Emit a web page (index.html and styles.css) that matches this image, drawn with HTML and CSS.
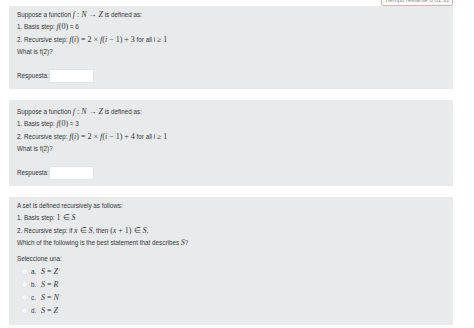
FILE: index.html
```html
<!DOCTYPE html>
<html lang="es">
<head>
<meta charset="utf-8">
<title>Quiz</title>
<link rel="stylesheet" href="styles.css">
</head>
<body>
<div class="timer">Tiempo restante 0:01:31</div>
<main class="page">
  <section class="que que-1">
    <div class="line">Suppose a function <span class="m"><i>f</i> : <i>N</i> → <i>Z</i></span> is defined as:</div>
    <div class="line">1. Basis step: <span class="m"><i>f</i>(0)</span> = 6</div>
    <div class="line tall">2. Recursive step: <span class="m"><i>f</i>(<i>i</i>) = 2 × <i>f</i>(<i>i</i> − 1) + 3</span> for all i <span class="m">≥ 1</span></div>
    <div class="line">What is f(2)?</div>
    <div class="answer"><span>Respuesta:</span><span class="input"></span></div>
  </section>
  <section class="que que-2">
    <div class="line">Suppose a function <span class="m"><i>f</i> : <i>N</i> → <i>Z</i></span> is defined as:</div>
    <div class="line">1. Basis step: <span class="m"><i>f</i>(0)</span> = 3</div>
    <div class="line tall">2. Recursive step: <span class="m"><i>f</i>(<i>i</i>) = 2 × <i>f</i>(<i>i</i> − 1) + 4</span> for all i <span class="m">≥ 1</span></div>
    <div class="line">What is f(2)?</div>
    <div class="answer"><span>Respuesta:</span><span class="input"></span></div>
  </section>
  <section class="que que-3">
    <div class="line">A set is defined recursively as follows:</div>
    <div class="line">1. Basis step: <span class="m">1 ∈ <i>S</i></span></div>
    <div class="line tall">2. Recursive step: if <span class="m"><i>x</i> ∈ <i>S</i></span>, then <span class="m">(<i>x</i> + 1) ∈ <i>S</i>.</span></div>
    <div class="line">Which of the following is the best statement that describes <span class="m"><i>S</i></span>?</div>
    <div class="prompt">Seleccione una:</div>
    <div class="options">
      <div class="opt"><span class="radio"></span><span class="letter">a.</span><span class="m"><i>S</i> = <i>Z</i><sup>+</sup></span></div>
      <div class="opt"><span class="radio"></span><span class="letter">b.</span><span class="m"><i>S</i> = <i>R</i></span></div>
      <div class="opt"><span class="radio"></span><span class="letter">c.</span><span class="m"><i>S</i> = <i>N</i></span></div>
      <div class="opt"><span class="radio"></span><span class="letter">d.</span><span class="m"><i>S</i> = <i>Z</i></span></div>
    </div>
  </section>
</main>
</body>
</html>
```
FILE: styles.css
```css
html, body {
  margin: 0;
  padding: 0;
  background: #ffffff;
}
body {
  font-family: "Liberation Sans", Arial, sans-serif;
  font-size: 6.3px;
  color: #33373b;
  position: relative;
  width: 474px;
  height: 328px;
  overflow: hidden;
}
.timer {
  position: absolute;
  top: -7px;
  left: 381px;
  width: 70px;
  height: 11px;
  border: 1px solid #dcb2b2;
  border-radius: 2px;
  background: #fff;
  color: #8a8a8a;
  font-size: 6px;
  line-height: 12px;
  text-align: center;
  box-sizing: content-box;
}
.page {
  padding: 6px 21px 0 9px;
  display: flex;
  flex-direction: column;
  gap: 11px;
}
.que {
  background: #e9eaec;
  padding: 4px 8px 7px 8px;
  display: flex;
  flex-direction: column;
}
.que-1 { padding-top: 3px; }
.que-2 { padding-top: 6px; }
.que-3 { padding-top: 3px; padding-bottom: 8px; }
.line {
  height: 12px;
  line-height: 12px;
  white-space: nowrap;
}
.line.tall {
  height: 13px;
  line-height: 13px;
}
.m {
  font-family: "Liberation Serif", "Times New Roman", serif;
  font-size: 8px;
}
.m i {
  font-style: italic;
}
.m sup {
  font-size: 5px;
  vertical-align: 3px;
  line-height: 0;
}
.answer {
  margin-top: 11px;
  display: flex;
  align-items: center;
  gap: 0;
  height: 13px;
}
.input {
  display: block;
  width: 43px;
  height: 12px;
  margin-left: 0;
  background: #ffffff;
  border: 1px solid #e2e4e7;
  border-radius: 1px;
}
.prompt {
  margin-top: 4px;
  height: 12px;
  line-height: 12px;
}
.options {
  display: flex;
  flex-direction: column;
}
.opt {
  height: 13px;
  display: flex;
  align-items: center;
  padding-left: 4px;
}
.radio {
  width: 5px;
  height: 5px;
  border-radius: 50%;
  background: #f6f7f8;
  border: 0.5px solid #e0e2e5;
  margin-right: 3px;
}
.letter {
  width: 10px;
}
```
